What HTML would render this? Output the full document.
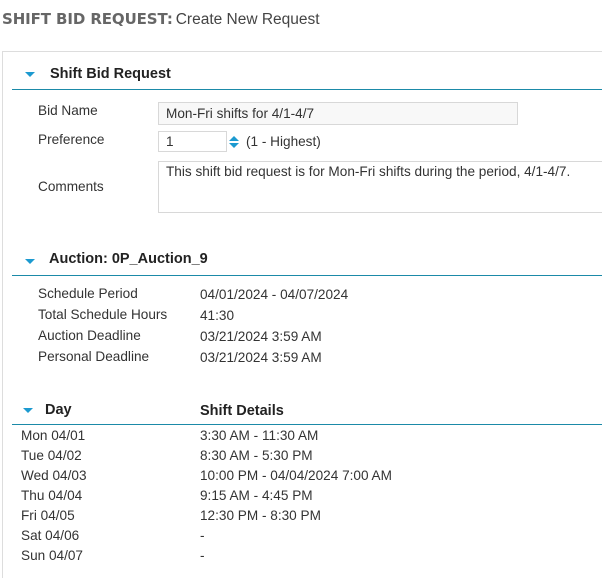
<!DOCTYPE html>
<html style="height:578px;overflow:hidden"><head><style>
body{margin:0;width:602px;height:578px;background:#fff;font-family:"Liberation Sans",sans-serif;font-size:13.6px;color:#333;position:relative;overflow:hidden}
.a{position:absolute;white-space:nowrap;line-height:16px}
.b{font-weight:bold;font-size:14.5px;color:#222}
.line{position:absolute;height:1px;background:#1b8aa8}
.tri{position:absolute;width:0;height:0;border-left:5px solid transparent;border-right:5px solid transparent;border-top:5px solid #1c9ad0}
.box{position:absolute;border:1px solid #d8d8d8;box-sizing:border-box}
</style></head><body>
<div class="a" style="left:2px;top:10px;font-size:15.5px;line-height:18px"><span style="font-family:'DejaVu Sans',sans-serif;font-weight:bold;color:#666;font-size:15px;letter-spacing:-0.1px">SHIFT BID REQUEST:</span><span style="color:#444;margin-left:3px">Create New Request</span></div>
<div style="position:absolute;left:2px;top:51px;width:620px;height:540px;border-left:1px solid #ddd;border-top:1px solid #ddd"></div>

<div class="tri" style="left:25px;top:72px"></div>
<div class="a b" style="left:50px;top:66px">Shift Bid Request</div>
<div class="line" style="left:12px;top:89px;width:600px"></div>

<div class="a" style="left:38px;top:103px">Bid Name</div>
<div class="box" style="left:158px;top:102px;width:360px;height:23px;background:#f8f8f8"></div>
<div class="a" style="left:166px;top:106px">Mon-Fri shifts for 4/1-4/7</div>

<div class="a" style="left:38px;top:132px">Preference</div>
<div class="box" style="left:158px;top:131px;width:69px;height:21px"></div>
<div class="a" style="left:166px;top:134px">1</div>
<div class="tri" style="left:229px;top:143px"></div>
<div style="position:absolute;left:229px;top:136px;width:0;height:0;border-left:5px solid transparent;border-right:5px solid transparent;border-bottom:5px solid #1c9ad0"></div>
<div class="a" style="left:246px;top:134px">(1 - Highest)</div>

<div class="a" style="left:38px;top:179px">Comments</div>
<div class="box" style="left:158px;top:161px;width:460px;height:52px"></div>
<div class="a" style="left:166px;top:164px">This shift bid request is for Mon-Fri shifts during the period, 4/1-4/7.</div>

<div class="tri" style="left:25px;top:259px"></div>
<div class="a b" style="left:49px;top:251px">Auction: 0P_Auction_9</div>
<div class="line" style="left:12px;top:275px;width:600px"></div>

<div class="a" style="left:38px;top:286px">Schedule Period</div><div class="a" style="left:200px;top:287px">04/01/2024 - 04/07/2024</div>
<div class="a" style="left:38px;top:307px">Total Schedule Hours</div><div class="a" style="left:200px;top:308px">41:30</div>
<div class="a" style="left:38px;top:328px">Auction Deadline</div><div class="a" style="left:200px;top:329px">03/21/2024 3:59 AM</div>
<div class="a" style="left:38px;top:349px">Personal Deadline</div><div class="a" style="left:200px;top:350px">03/21/2024 3:59 AM</div>

<div class="tri" style="left:23px;top:408px"></div>
<div class="a b" style="left:45px;top:402px">Day</div>
<div class="a b" style="left:200px;top:403px">Shift Details</div>
<div class="line" style="left:12px;top:424px;width:600px"></div>

<div class="a" style="left:21px;top:428px">Mon 04/01</div><div class="a" style="left:200px;top:428px">3:30 AM - 11:30 AM</div>
<div class="a" style="left:21px;top:448px">Tue 04/02</div><div class="a" style="left:200px;top:448px">8:30 AM - 5:30 PM</div>
<div class="a" style="left:21px;top:468px">Wed 04/03</div><div class="a" style="left:200px;top:468px">10:00 PM - 04/04/2024 7:00 AM</div>
<div class="a" style="left:21px;top:488px">Thu 04/04</div><div class="a" style="left:200px;top:488px">9:15 AM - 4:45 PM</div>
<div class="a" style="left:21px;top:508px">Fri 04/05</div><div class="a" style="left:200px;top:508px">12:30 PM - 8:30 PM</div>
<div class="a" style="left:21px;top:528px">Sat 04/06</div><div class="a" style="left:200px;top:528px">-</div>
<div class="a" style="left:21px;top:548px">Sun 04/07</div><div class="a" style="left:200px;top:548px">-</div>
</body></html>
